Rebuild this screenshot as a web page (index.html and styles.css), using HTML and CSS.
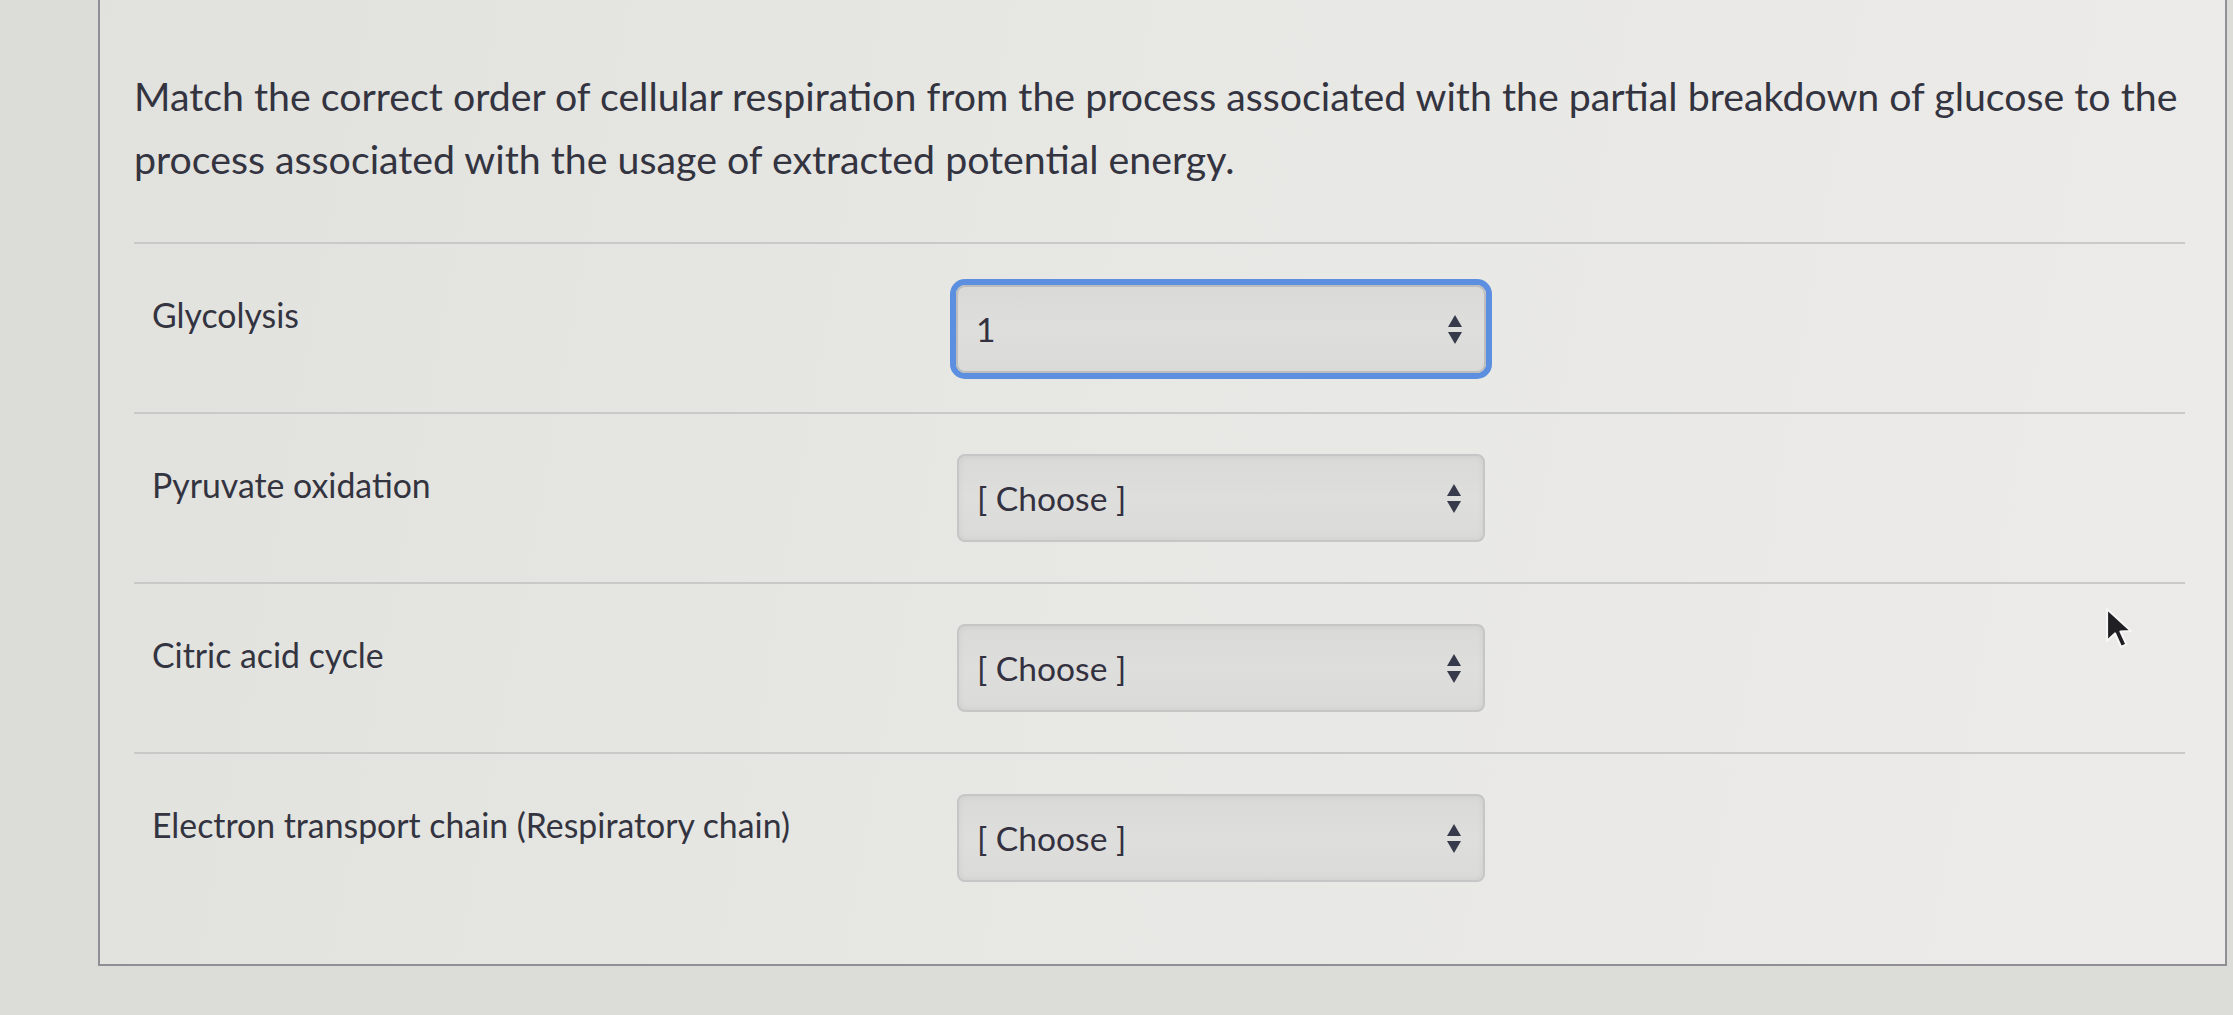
FILE: index.html
```html
<!DOCTYPE html>
<html lang="en">
<head>
<meta charset="utf-8">
<title>Matching question</title>
<link rel="stylesheet" href="styles.css">
</head>
<body>
<div class="panel">
  <p class="question">Match the correct order of cellular respiration from the process associated with the partial breakdown of glucose to the process associated with the usage of extracted potential energy.</p>
  <div class="rows">
    <div class="row">
      <div class="label">Glycolysis</div>
      <div class="select focused"><span>1</span><span class="arrows"><i class="up"></i><i class="down"></i></span></div>
    </div>
    <div class="row">
      <div class="label">Pyruvate oxidation</div>
      <div class="select"><span>[ Choose ]</span><span class="arrows"><i class="up"></i><i class="down"></i></span></div>
    </div>
    <div class="row">
      <div class="label">Citric acid cycle</div>
      <div class="select"><span>[ Choose ]</span><span class="arrows"><i class="up"></i><i class="down"></i></span></div>
    </div>
    <div class="row">
      <div class="label">Electron transport chain (Respiratory chain)</div>
      <div class="select"><span>[ Choose ]</span><span class="arrows"><i class="up"></i><i class="down"></i></span></div>
    </div>
  </div>
</div>
<svg class="cursor" width="34" height="46" viewBox="0 0 34 46">
  <path d="M3 3 L3 35 L11 27.5 L17 41 L22.5 38.5 L16.5 25.5 L27 25 Z" fill="#1f1f24" stroke="#f6f6f6" stroke-width="2.2" stroke-linejoin="round"/>
</svg>
</body>
</html>
```

FILE: styles.css
```css
html, body {
  margin: 0;
  padding: 0;
}
body {
  width: 2233px;
  height: 1015px;
  overflow: hidden;
  background: #dcdcd8;
  font-family: Lato, "Open Sans", sans-serif;
  color: #33343f;
  position: relative;
}
.panel {
  box-sizing: border-box;
  margin-left: 98px;
  width: 2129px;
  height: 966px;
  border-left: 2px solid #8f8f95;
  border-right: 2px solid #8f8f95;
  border-bottom: 2px solid #8f8f95;
  padding: 64px 30px 0 34px;
  background: linear-gradient(100deg, #e1e1de 0%, #e7e7e4 45%, #ecebe9 100%);
}
.question {
  margin: 0 0 52px 0;
  font-size: 39.3px;
  line-height: 63px;
  letter-spacing: 0;
}
.rows {
  display: flex;
  flex-direction: column;
  margin-right: 10px;
}
.row {
  box-sizing: border-box;
  height: 170px;
  border-top: 2px solid #c9c9c7;
  display: flex;
  align-items: flex-start;
  padding-top: 40px;
}
.label {
  box-sizing: border-box;
  width: 823px;
  padding-left: 18px;
  margin-top: 11px;
  font-size: 33.8px;
  line-height: 40px;
}
.select {
  box-sizing: border-box;
  width: 528px;
  height: 88px;
  border: 2px solid #c6c6c6;
  border-radius: 8px;
  background: linear-gradient(180deg, #d9d9d7 0%, #dededc 50%, #dadad8 100%);
  box-shadow: inset 0 0 6px rgba(0,0,0,0.06);
  display: flex;
  align-items: center;
  justify-content: space-between;
  padding: 0 22px 0 18px;
  font-size: 33.6px;
  color: #33313f;
}
.select.focused {
  margin-left: -1px;
  width: 530px;
  height: 88px;
  margin-top: 1px;
  box-shadow: 0 0 0 6px #5c8fe0;
  border-color: #bdbdbd;
  border-radius: 9px;
}
.arrows {
  display: flex;
  flex-direction: column;
  align-items: center;
  gap: 5px;
}
.arrows i {
  display: block;
  width: 0;
  height: 0;
  border-left: 7px solid transparent;
  border-right: 7px solid transparent;
}
.arrows .up {
  border-bottom: 12px solid #363a4a;
}
.arrows .down {
  border-top: 12px solid #363a4a;
}
.cursor {
  position: absolute;
  left: 2104px;
  top: 606px;
}
```
